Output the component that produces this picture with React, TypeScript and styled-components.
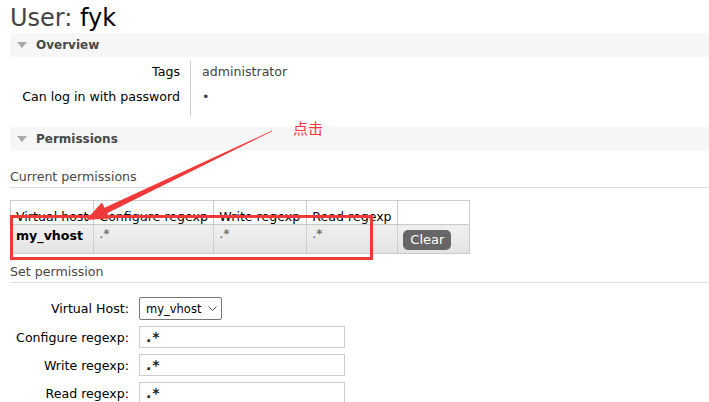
import React from 'react';
import styled, { createGlobalStyle } from 'styled-components';

const GlobalStyle = createGlobalStyle`
  body {
    margin: 0;
    background: #fff;
    font-family: "DejaVu Sans", Verdana, sans-serif;
    font-size: 12.6px;
    color: #000;
  }
`;

const Page = styled.div`
  position: relative;
  height: 402px;
  padding: 0 0 0 10px;
  overflow: hidden;
`;

const Title = styled.h1`
  margin: 0;
  padding-top: 4px;
  font-size: 24px;
  line-height: 28px;
  font-weight: normal;
  color: #444;
  b {
    font-weight: normal;
    color: #000;
  }
`;

const SectionHeader = styled.div`
  display: flex;
  align-items: center;
  gap: 9px;
  height: 24px;
  margin-top: 1px;
  padding-left: 7px;
  background: #f6f6f6;
  font-size: 12px;
  font-weight: bold;
  color: #484848;
`;

const Triangle = styled.span`
  width: 0;
  height: 0;
  border-left: 5px solid transparent;
  border-right: 5px solid transparent;
  border-top: 6px solid #aaa;
`;

const Facts = styled.table`
  border-collapse: collapse;
  margin: 4px 0 11px 0;
  th {
    width: 170px;
    padding: 1px 10px 5px 0;
    text-align: right;
    font-weight: normal;
    color: #000;
    line-height: 19px;
    vertical-align: top;
  }
  td {
    padding: 1px 0 5px 11px;
    border-left: 1px solid #ccc;
    color: #444;
    line-height: 19px;
    vertical-align: top;
  }
  tr:last-child td,
  tr:last-child th {
    padding-bottom: 10px;
  }
`;

const SubTitle = styled.h3<{ $top: number }>`
  margin: ${(p) => p.$top}px 0 0 0;
  padding-bottom: 2px;
  font-size: 12.6px;
  line-height: 16px;
  font-weight: normal;
  color: #484848;
  border-bottom: 1px solid #ddd;
`;

const PermTable = styled.table`
  border-collapse: collapse;
  margin: 12px 0 10px 0;
  th {
    height: 23px;
    padding: 0 5px;
    border: 1px solid #ccc;
    text-align: left;
    font-weight: normal;
    color: #000;
    white-space: nowrap;
    overflow: hidden;
    vertical-align: bottom;
  }
  td {
    height: 29px;
    box-sizing: border-box;
    padding: 0 5px;
    border: 1px solid #ccc;
    background: linear-gradient(#f0f0f0, #e3e3e3);
    color: #555;
    vertical-align: middle;
  }
`;

const VhostCell = styled.td`
  && {
    font-weight: bold;
    color: #000;
    vertical-align: top;
    padding-top: 3px;
  }
`;

const Regexp = styled.td`
  && {
    vertical-align: top;
    padding-top: 1px;
  }
`;

const ClearButton = styled.button`
  display: block;
  margin-top: 1px;
  border: 0;
  border-radius: 5px;
  background: #666;
  color: #fff;
  font-family: inherit;
  font-size: 13px;
  padding: 2px 7px;
  line-height: 16px;
`;

const Form = styled.div`
  display: grid;
  grid-template-columns: 119px auto;
  column-gap: 10px;
  row-gap: 6px;
  margin-top: 14px;
  align-items: center;
`;

const Label = styled.label`
  text-align: right;
  color: #000;
`;

const Select = styled.div`
  display: flex;
  align-items: center;
  justify-content: space-between;
  width: 83px;
  height: 23px;
  box-sizing: border-box;
  padding: 0 4px 0 6px;
  border: 1px solid #767676;
  border-radius: 2px;
  font-size: 11.5px;
`;

const Input = styled.div`
  width: 206px;
  height: 22px;
  box-sizing: border-box;
  padding: 2px 6px;
  border: 1px solid #ccc;
  font-size: 14px;
  font-weight: bold;
  letter-spacing: 1px;
  line-height: 16px;
  color: #222;
`;

const Overlay = styled.svg`
  position: absolute;
  left: 0;
  top: 0;
  pointer-events: none;
`;

const Note = styled.span`
  position: absolute;
  left: 293px;
  top: 117px;
  font-family: "Noto Sans CJK SC", sans-serif;
  font-size: 15px;
  color: #f03a3a;
`;

const Chevron = () => (
  <svg width="9" height="6" viewBox="0 0 9 6">
    <path d="M0.5 0.5 L4.5 4.5 L8.5 0.5" fill="none" stroke="#555" strokeWidth="1" />
  </svg>
);

const App = () => (
  <Page>
    <GlobalStyle />
    <Title>
      User: <b>fyk</b>
    </Title>
    <SectionHeader>
      <Triangle />
      Overview
    </SectionHeader>
    <Facts>
      <tbody>
        <tr>
          <th>Tags</th>
          <td>administrator</td>
        </tr>
        <tr>
          <th>Can log in with password</th>
          <td>•</td>
        </tr>
      </tbody>
    </Facts>
    <SectionHeader>
      <Triangle />
      Permissions
    </SectionHeader>
    <SubTitle $top={18}>Current permissions</SubTitle>
    <PermTable>
      <thead>
        <tr>
          <th style={{ width: 72 }}>Virtual host</th>
          <th style={{ width: 109 }}>Configure regexp</th>
          <th style={{ width: 82 }}>Write regexp</th>
          <th style={{ width: 80 }}>Read regexp</th>
          <th style={{ width: 61 }}></th>
        </tr>
      </thead>
      <tbody>
        <tr>
          <VhostCell>my_vhost</VhostCell>
          <Regexp>.*</Regexp>
          <Regexp>.*</Regexp>
          <Regexp>.*</Regexp>
          <td>
            <ClearButton>Clear</ClearButton>
          </td>
        </tr>
      </tbody>
    </PermTable>
    <SubTitle $top={0}>Set permission</SubTitle>
    <Form>
      <Label>Virtual Host:</Label>
      <Select>
        my_vhost <Chevron />
      </Select>
      <Label>Configure regexp:</Label>
      <Input>.*</Input>
      <Label>Write regexp:</Label>
      <Input>.*</Input>
      <Label>Read regexp:</Label>
      <Input>.*</Input>
    </Form>

    <Overlay width="709" height="402" viewBox="0 0 709 402">
      <rect x="11.5" y="216.5" width="360" height="42" fill="none" stroke="#f03a3a" strokeWidth="3" />
      <polygon
        points="272.2,130.6 271.8,131.4 107.1,213.2 109.7,218.6 86,220 101.9,202.4 104.5,207.8"
        fill="#f03a3a"
      />
    </Overlay>
    <Note>点击</Note>
  </Page>
);

export default App;
